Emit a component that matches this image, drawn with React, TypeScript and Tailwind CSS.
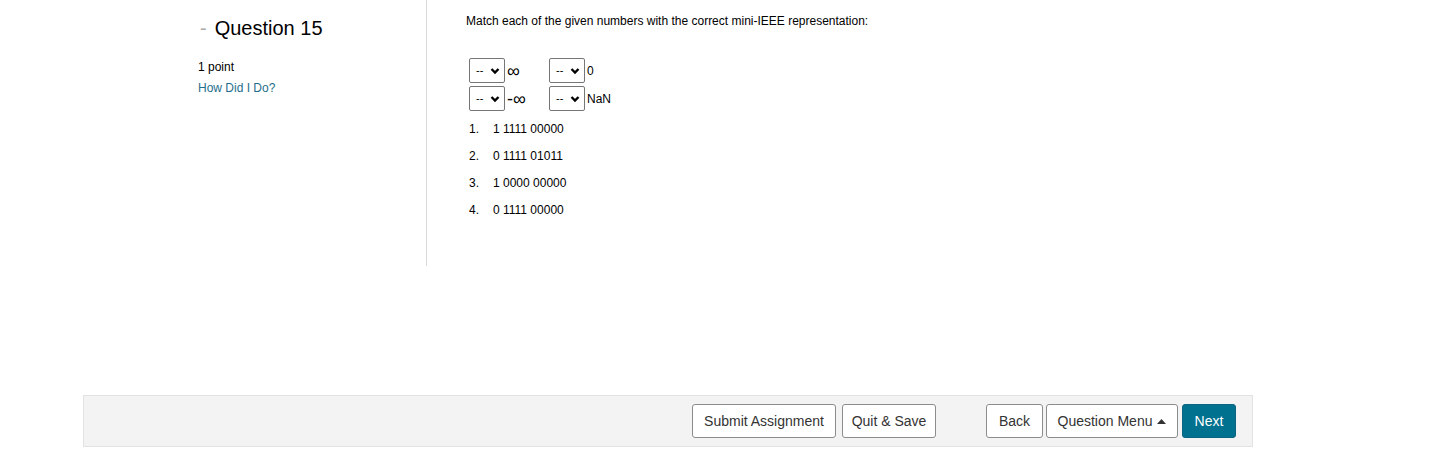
import React from "react";

function Sel() {
  return (
    <div className="flex h-[25px] w-[36px] items-center justify-between rounded-[2px] border border-[#767676] bg-white pl-[6px] pr-[4px] text-[11px] leading-none text-black">
      <span>--</span>
      <svg width="10" height="8" viewBox="0 0 10 8">
        <path d="M1.5 2 L5 5.5 L8.5 2" fill="none" stroke="#000" strokeWidth="2.4" />
      </svg>
    </div>
  );
}

function Pair({ label }: { label: React.ReactNode }) {
  return (
    <div className="flex w-[80px] items-center gap-[2px]">
      <Sel />
      <span className="text-[12px] leading-none text-black">{label}</span>
    </div>
  );
}

function Btn({ children, primary, w }: { children: React.ReactNode; primary?: boolean; w: string }) {
  return (
    <button
      className={
        (primary
          ? "h-[34px] rounded-[3px] border border-[#0b6580] bg-[#00718f] text-[14px] text-white "
          : "h-[34px] rounded-[3px] border border-[#8c8c8c] bg-white text-[14px] text-[#333] ") + w
      }
    >
      {children}
    </button>
  );
}

export default function App() {
  const items = ["1 1111 00000", "0 1111 01011", "1 0000 00000", "0 1111 00000"];
  return (
    <div
      className="h-[465px] w-[1446px] overflow-hidden bg-white"
      style={{ fontFamily: '"Liberation Sans", Arial, sans-serif' }}
    >
      <div className="flex h-[266px]">
        <div className="w-[427px] border-r border-[#d9d9d9] pl-[198px] pt-[15px]">
          <div className="flex items-center text-[20px] leading-[26px] text-black">
            <span className="ml-[2px] mr-[8px] text-[#aaa]">-</span>
            <span>Question 15</span>
          </div>
          <div className="mt-[19px] text-[12px] leading-[15px] text-black">1 point</div>
          <div className="mt-[6px] text-[12px] leading-[15px] text-[#1f6e8c]">How Did I Do?</div>
        </div>
        <div className="pl-[39px] pt-[14px]">
          <div className="text-[12px] leading-[15px] text-black">
            Match each of the given numbers with the correct mini-IEEE representation:
          </div>
          <div className="mt-[29px] ml-[3px] flex flex-col gap-[3px]">
            <div className="flex">
              <Pair label={<span className="text-[18px] font-light">∞</span>} />
              <Pair label="0" />
            </div>
            <div className="flex">
              <Pair label={<span className="text-[18px] font-light">-∞</span>} />
              <Pair label="NaN" />
            </div>
          </div>
          <div className="mt-[11px] ml-[3px] flex flex-col gap-[12px]">
            {items.map((t, i) => (
              <div key={i} className="flex text-[12px] leading-[15px] text-black">
                <span className="w-[24px]">{i + 1}.</span>
                <span>{t}</span>
              </div>
            ))}
          </div>
        </div>
      </div>
      <div className="ml-[83px] mt-[129px] flex h-[52px] w-[1170px] items-center border border-[#e3e3e3] bg-[#f3f3f3] pl-[608px]">
        <div className="flex gap-[6px]">
          <Btn w="w-[144px]">Submit Assignment</Btn>
          <Btn w="w-[94px]">Quit &amp; Save</Btn>
        </div>
        <div className="ml-[50px] flex gap-[3px]">
          <Btn w="w-[57px]">Back</Btn>
          <Btn w="w-[132px]">
            <span className="flex items-center justify-center gap-[5px]">
              Question Menu
              <svg width="9" height="5" viewBox="0 0 9 5">
                <path d="M0 5 L4.5 0 L9 5 Z" fill="#333" />
              </svg>
            </span>
          </Btn>
          <Btn primary w="ml-[1px] w-[54px]">Next</Btn>
        </div>
      </div>
    </div>
  );
}
